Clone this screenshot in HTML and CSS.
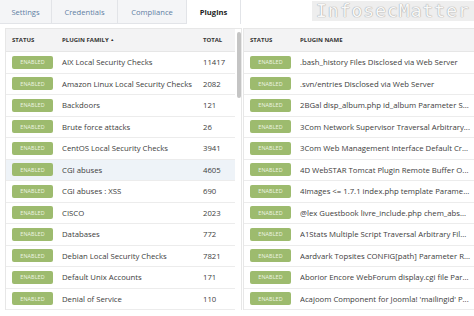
FILE: index.html
```html
<!DOCTYPE html>
<html>
  <head>
    <title>Plugins</title>
    <meta name="viewport" content="width=device-width, initial-scale=1.0" />
    <link rel="stylesheet" href="styles.css">
  </head>

  <body>
    <div class="top">
      <div class="tabs">
        <div class="tab tab-settings">Settings</div>
        <div class="tab tab-credentials">Credentials</div>
        <div class="tab tab-compliance">Compliance</div>
        <div class="tab active">Plugins</div>
      </div>
      <div class="watermark">InfosecMatter</div>
    </div>

    <div class="main">
      <div class="panel families">
        <div class="table">
          <div class="row head">
            <div class="col-status">STATUS</div>
            <div class="col-family">PLUGIN FAMILY <span class="sort">&#9650;</span></div>
            <div class="col-total">TOTAL</div>
          </div>
          <div class="row"><div class="col-status"><span class="badge">ENABLED</span></div><div class="col-family">AIX Local Security Checks</div><div class="col-total">11417</div></div>
          <div class="row"><div class="col-status"><span class="badge">ENABLED</span></div><div class="col-family">Amazon Linux Local Security Checks</div><div class="col-total">2082</div></div>
          <div class="row"><div class="col-status"><span class="badge">ENABLED</span></div><div class="col-family">Backdoors</div><div class="col-total">121</div></div>
          <div class="row"><div class="col-status"><span class="badge">ENABLED</span></div><div class="col-family">Brute force attacks</div><div class="col-total">26</div></div>
          <div class="row"><div class="col-status"><span class="badge">ENABLED</span></div><div class="col-family">CentOS Local Security Checks</div><div class="col-total">3941</div></div>
          <div class="row selected"><div class="col-status"><span class="badge">ENABLED</span></div><div class="col-family">CGI abuses</div><div class="col-total">4605</div></div>
          <div class="row"><div class="col-status"><span class="badge">ENABLED</span></div><div class="col-family">CGI abuses : XSS</div><div class="col-total">690</div></div>
          <div class="row"><div class="col-status"><span class="badge">ENABLED</span></div><div class="col-family">CISCO</div><div class="col-total">2023</div></div>
          <div class="row"><div class="col-status"><span class="badge">ENABLED</span></div><div class="col-family">Databases</div><div class="col-total">772</div></div>
          <div class="row"><div class="col-status"><span class="badge">ENABLED</span></div><div class="col-family">Debian Local Security Checks</div><div class="col-total">7821</div></div>
          <div class="row"><div class="col-status"><span class="badge">ENABLED</span></div><div class="col-family">Default Unix Accounts</div><div class="col-total">171</div></div>
          <div class="row"><div class="col-status"><span class="badge">ENABLED</span></div><div class="col-family">Denial of Service</div><div class="col-total">110</div></div>
        </div>
        <div class="scroll"><div class="thumb"></div></div>
      </div>

      <div class="panel plugins">
        <div class="table">
          <div class="row head">
            <div class="col-status">STATUS</div>
            <div class="col-name">PLUGIN NAME</div>
          </div>
          <div class="row"><div class="col-status"><span class="badge">ENABLED</span></div><div class="col-name">.bash_history Files Disclosed via Web Server</div></div>
          <div class="row"><div class="col-status"><span class="badge">ENABLED</span></div><div class="col-name">.svn/entries Disclosed via Web Server</div></div>
          <div class="row"><div class="col-status"><span class="badge">ENABLED</span></div><div class="col-name">2BGal disp_album.php id_album Parameter S...</div></div>
          <div class="row"><div class="col-status"><span class="badge">ENABLED</span></div><div class="col-name">3Com Network Supervisor Traversal Arbitrary...</div></div>
          <div class="row"><div class="col-status"><span class="badge">ENABLED</span></div><div class="col-name">3Com Web Management Interface Default Cr...</div></div>
          <div class="row"><div class="col-status"><span class="badge">ENABLED</span></div><div class="col-name">4D WebSTAR Tomcat Plugin Remote Buffer O...</div></div>
          <div class="row"><div class="col-status"><span class="badge">ENABLED</span></div><div class="col-name">4Images &lt;= 1.7.1 index.php template Parame...</div></div>
          <div class="row"><div class="col-status"><span class="badge">ENABLED</span></div><div class="col-name">@lex Guestbook livre_include.php chem_abs...</div></div>
          <div class="row"><div class="col-status"><span class="badge">ENABLED</span></div><div class="col-name">A1Stats Multiple Script Traversal Arbitrary Fil...</div></div>
          <div class="row"><div class="col-status"><span class="badge">ENABLED</span></div><div class="col-name">Aardvark Topsites CONFIG[path] Parameter R...</div></div>
          <div class="row"><div class="col-status"><span class="badge">ENABLED</span></div><div class="col-name">Aborior Encore WebForum display.cgi file Par...</div></div>
          <div class="row"><div class="col-status"><span class="badge">ENABLED</span></div><div class="col-name">Acajoom Component for Joomla! 'mailingid' P...</div></div>
        </div>
      </div>
    </div>
  </body>
</html>
```

FILE: styles.css
```css
* {
  box-sizing: border-box;
}
body {
  margin: 0;
  font-family: "Open Sans", sans-serif;
  font-size: 7.75px;
  color: #3d3d3d;
  background: #ffffff;
}
.top {
  display: flex;
  height: 24px;
}
.tabs {
  display: flex;
  width: 241px;
  background: #f4f5f7;
  border-bottom: 1px solid #e2e4e8;
}
.tab {
  display: flex;
  align-items: center;
  justify-content: center;
  height: 23px;
  font-size: 7.6px;
  color: #5f7ea3;
  border-right: 1px solid #e2e4e8;
}
.tab-settings {
  width: 52px;
}
.tab-credentials {
  width: 66px;
}
.tab-compliance {
  width: 69px;
}
.tab.active {
  flex: 1;
  height: 24px;
  background: #ffffff;
  color: #222222;
  font-weight: bold;
  border-right: 1px solid #e2e4e8;
}
.watermark {
  margin-left: 71px;
  margin-top: 1px;
  flex: 1;
  height: 20px;
  background: #eeeeee;
  font-family: "DejaVu Sans Mono", monospace;
  font-size: 18px;
  line-height: 20px;
  padding-left: 4px;
  color: #f8f8f8;
  text-shadow: 0 0 1px #a0a0a0, 0 0 1px #a0a0a0;
  letter-spacing: 1px;
  white-space: nowrap;
  overflow: hidden;
}
.main {
  display: flex;
  padding: 4px 0 0 5px;
}
.panel {
  display: flex;
  border: 1px solid #e7e7e7;
  border-bottom: none;
}
.families {
  width: 237px;
}
.families .table {
  width: 229px;
}
.plugins {
  flex: 1;
  margin-left: 1px;
  border-right: none;
  overflow: hidden;
}
.plugins .table {
  width: 100%;
}
.row {
  display: flex;
  align-items: center;
  height: 21.5px;
  border-bottom: 1px solid #ececec;
  white-space: nowrap;
}
.row.head {
  height: 23px;
  background: #f3f3f4;
  font-size: 6px;
  font-weight: bold;
  color: #333333;
  border-bottom: 1px solid #e6e6e6;
}
.row.selected {
  background: #eef3f8;
}
.col-status {
  width: 56px;
  padding-left: 6px;
}
.col-family {
  width: 141px;
}
.col-total {
  flex: 1;
}
.col-name {
  flex: 1;
  overflow: hidden;
}
.sort {
  font-size: 4px;
  vertical-align: 1px;
}
.badge {
  display: inline-flex;
  align-items: center;
  justify-content: center;
  width: 41px;
  height: 13px;
  border-radius: 2px;
  background: #9dbb6e;
  color: #eef5e4;
  font-size: 5.4px;
  letter-spacing: 0.1px;
}
.scroll {
  flex: 1;
  padding: 3px 0 0 2px;
}
.thumb {
  width: 4px;
  height: 66px;
  border-radius: 2px;
  background: #c4c4c4;
}
```
